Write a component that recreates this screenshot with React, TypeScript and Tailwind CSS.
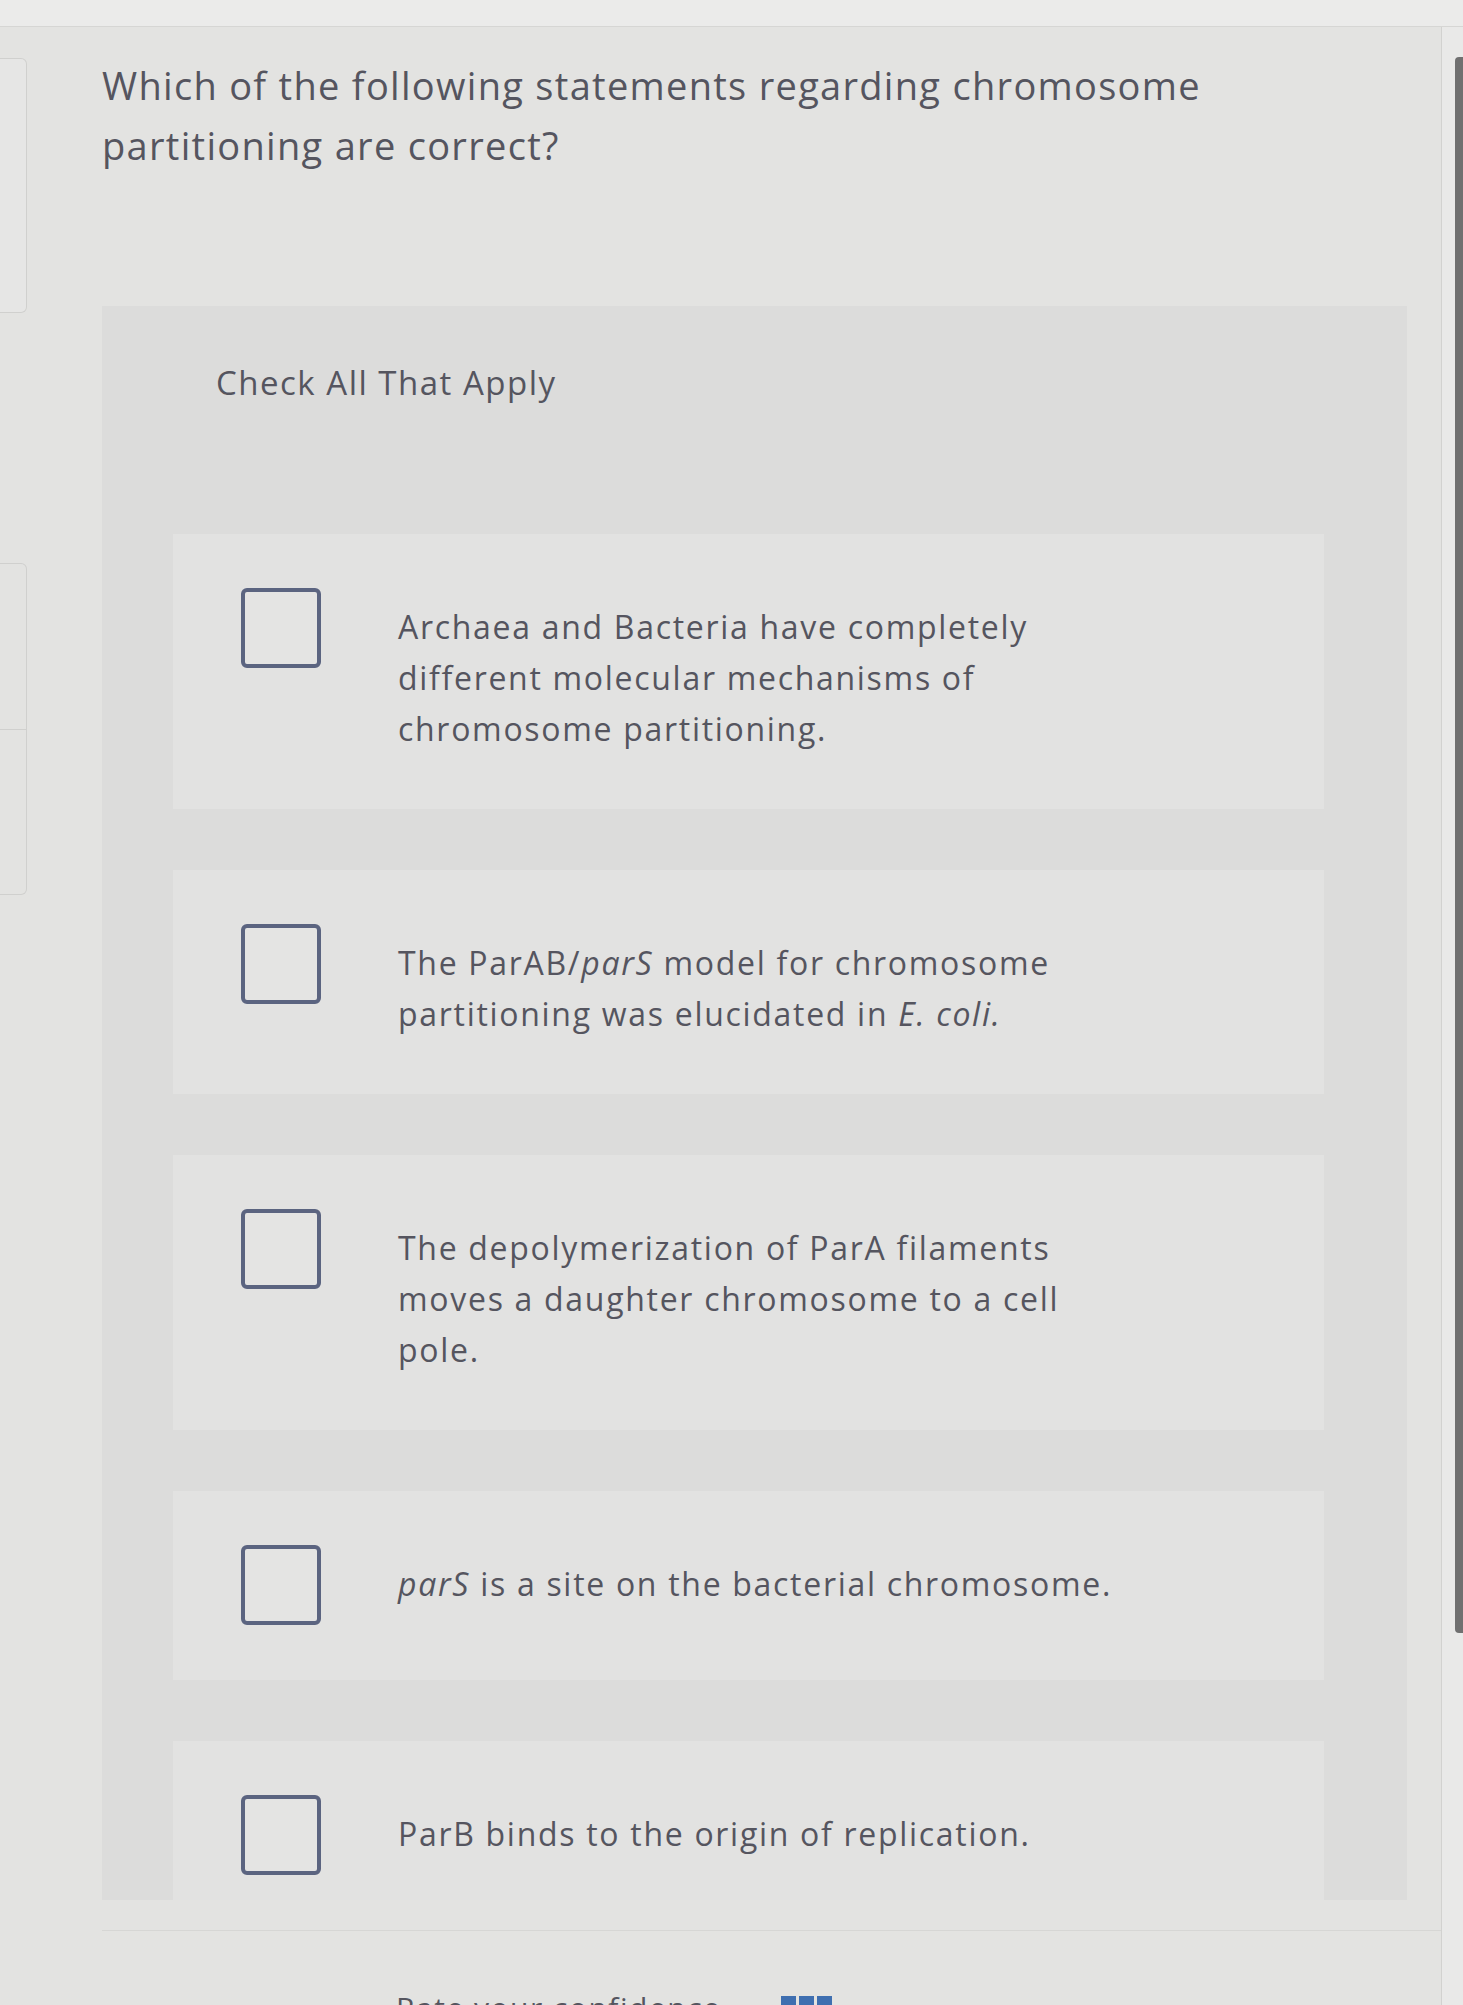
import React from "react";

/* ------------------------------------------------------------------ */
/*  Data                                                               */
/* ------------------------------------------------------------------ */
const options: React.ReactNode[][] = [
  [
    "Archaea and Bacteria have completely",
    "different molecular mechanisms of",
    "chromosome partitioning.",
  ],
  [
    <>
      The ParAB/<i>parS</i> model for chromosome
    </>,
    <>
      partitioning was elucidated in <i>E. coli.</i>
    </>,
  ],
  [
    "The depolymerization of ParA filaments",
    "moves a daughter chromosome to a cell",
    "pole.",
  ],
  [
    <>
      <i>parS</i> is a site on the bacterial chromosome.
    </>,
  ],
  ["ParB binds to the origin of replication."],
];

/* ------------------------------------------------------------------ */
/*  Pieces                                                             */
/* ------------------------------------------------------------------ */
function Checkbox() {
  return (
    <div className="h-[80px] w-[80px] shrink-0 rounded-[6px] border-[4px] border-[#5b6480] bg-[#e4e4e3]" />
  );
}

function Option({ lines, last }: { lines: React.ReactNode[]; last?: boolean }) {
  return (
    <li
      className={`flex items-start bg-[#e2e2e1] pl-[68px] pt-[54px] ${
        last ? "pb-[25px]" : "pb-[55px]"
      }`}
    >
      <Checkbox />
      <p className="ml-[77px] mt-[13px] text-[32px] font-medium leading-[51px] tracking-[1.7px] text-[#55555f]">
        {lines.map((l, i) => (
          <span key={i} className="block whitespace-nowrap">
            {l}
          </span>
        ))}
      </p>
    </li>
  );
}

/* ------------------------------------------------------------------ */
/*  Page                                                               */
/* ------------------------------------------------------------------ */
export default function App() {
  return (
    <div className="flex h-[2005px] w-[1463px] flex-col overflow-hidden bg-[#e3e3e1] font-['Open_Sans','Liberation_Sans',sans-serif]">
      {/* top strip */}
      <div className="h-[27px] shrink-0 border-b border-[#d6d6d4] bg-[#ebebea]" />

      <div className="flex flex-1">
        {/* left rail, cut off */}
        <aside className="flex w-[27px] shrink-0 flex-col pt-[31px]">
          <div className="h-[255px] rounded-r-md border border-l-0 border-[#d0d0ce] bg-[#e6e6e5]" />
          <div className="mt-[250px] flex h-[332px] flex-col rounded-r-md border border-l-0 border-[#d0d0ce]">
            <div className="h-[166px] border-b border-[#d0d0ce]" />
          </div>
        </aside>

        {/* main column */}
        <main className="w-[1414px] shrink-0 pl-[75px] pt-[28px]">
          <h1 className="text-[38px] font-medium leading-[60px] tracking-[1.3px] text-[#55555f]">
            Which of the following statements regarding chromosome
            <br />
            partitioning are correct?
          </h1>

          <section className="mt-[131px] w-[1305px] bg-[#dcdcdb] pl-[71px] pr-[83px] pt-[55px]">
            <h2 className="ml-[43px] text-[33px] font-medium leading-[44px] tracking-[1.5px] text-[#55555f]">
              Check All That Apply
            </h2>

            <ul className="mt-[129px] flex flex-col gap-[61px]">
              {options.map((lines, i) => (
                <Option key={i} lines={lines} last={i === options.length - 1} />
              ))}
            </ul>
          </section>

          <div className="mt-[30px] w-[1340px] border-t border-[#d6d6d4]" />

          {/* next row, cut off by the bottom edge */}
          <div className="mt-[57px] flex items-start pl-[294px]">
            <span className="text-[30px] font-medium leading-[40px] tracking-[1.5px] text-[#55555f]">
              Rate your confidence
            </span>
            <div className="ml-[60px] mt-[8px] flex gap-[3px]">
              <div className="h-[14px] w-[15px] bg-[#3f6fb0]" />
              <div className="h-[14px] w-[15px] bg-[#3f6fb0]" />
              <div className="h-[14px] w-[15px] bg-[#3f6fb0]" />
            </div>
          </div>
        </main>

        {/* right edge + scrollbar */}
        <div className="flex w-[22px] shrink-0 border-l border-[#d2d2d0] bg-[#e9e9e8]">
          <div className="ml-auto mt-[30px] h-[1576px] w-[8px] rounded-l-[4px] bg-[#707070]" />
        </div>
      </div>
    </div>
  );
}
